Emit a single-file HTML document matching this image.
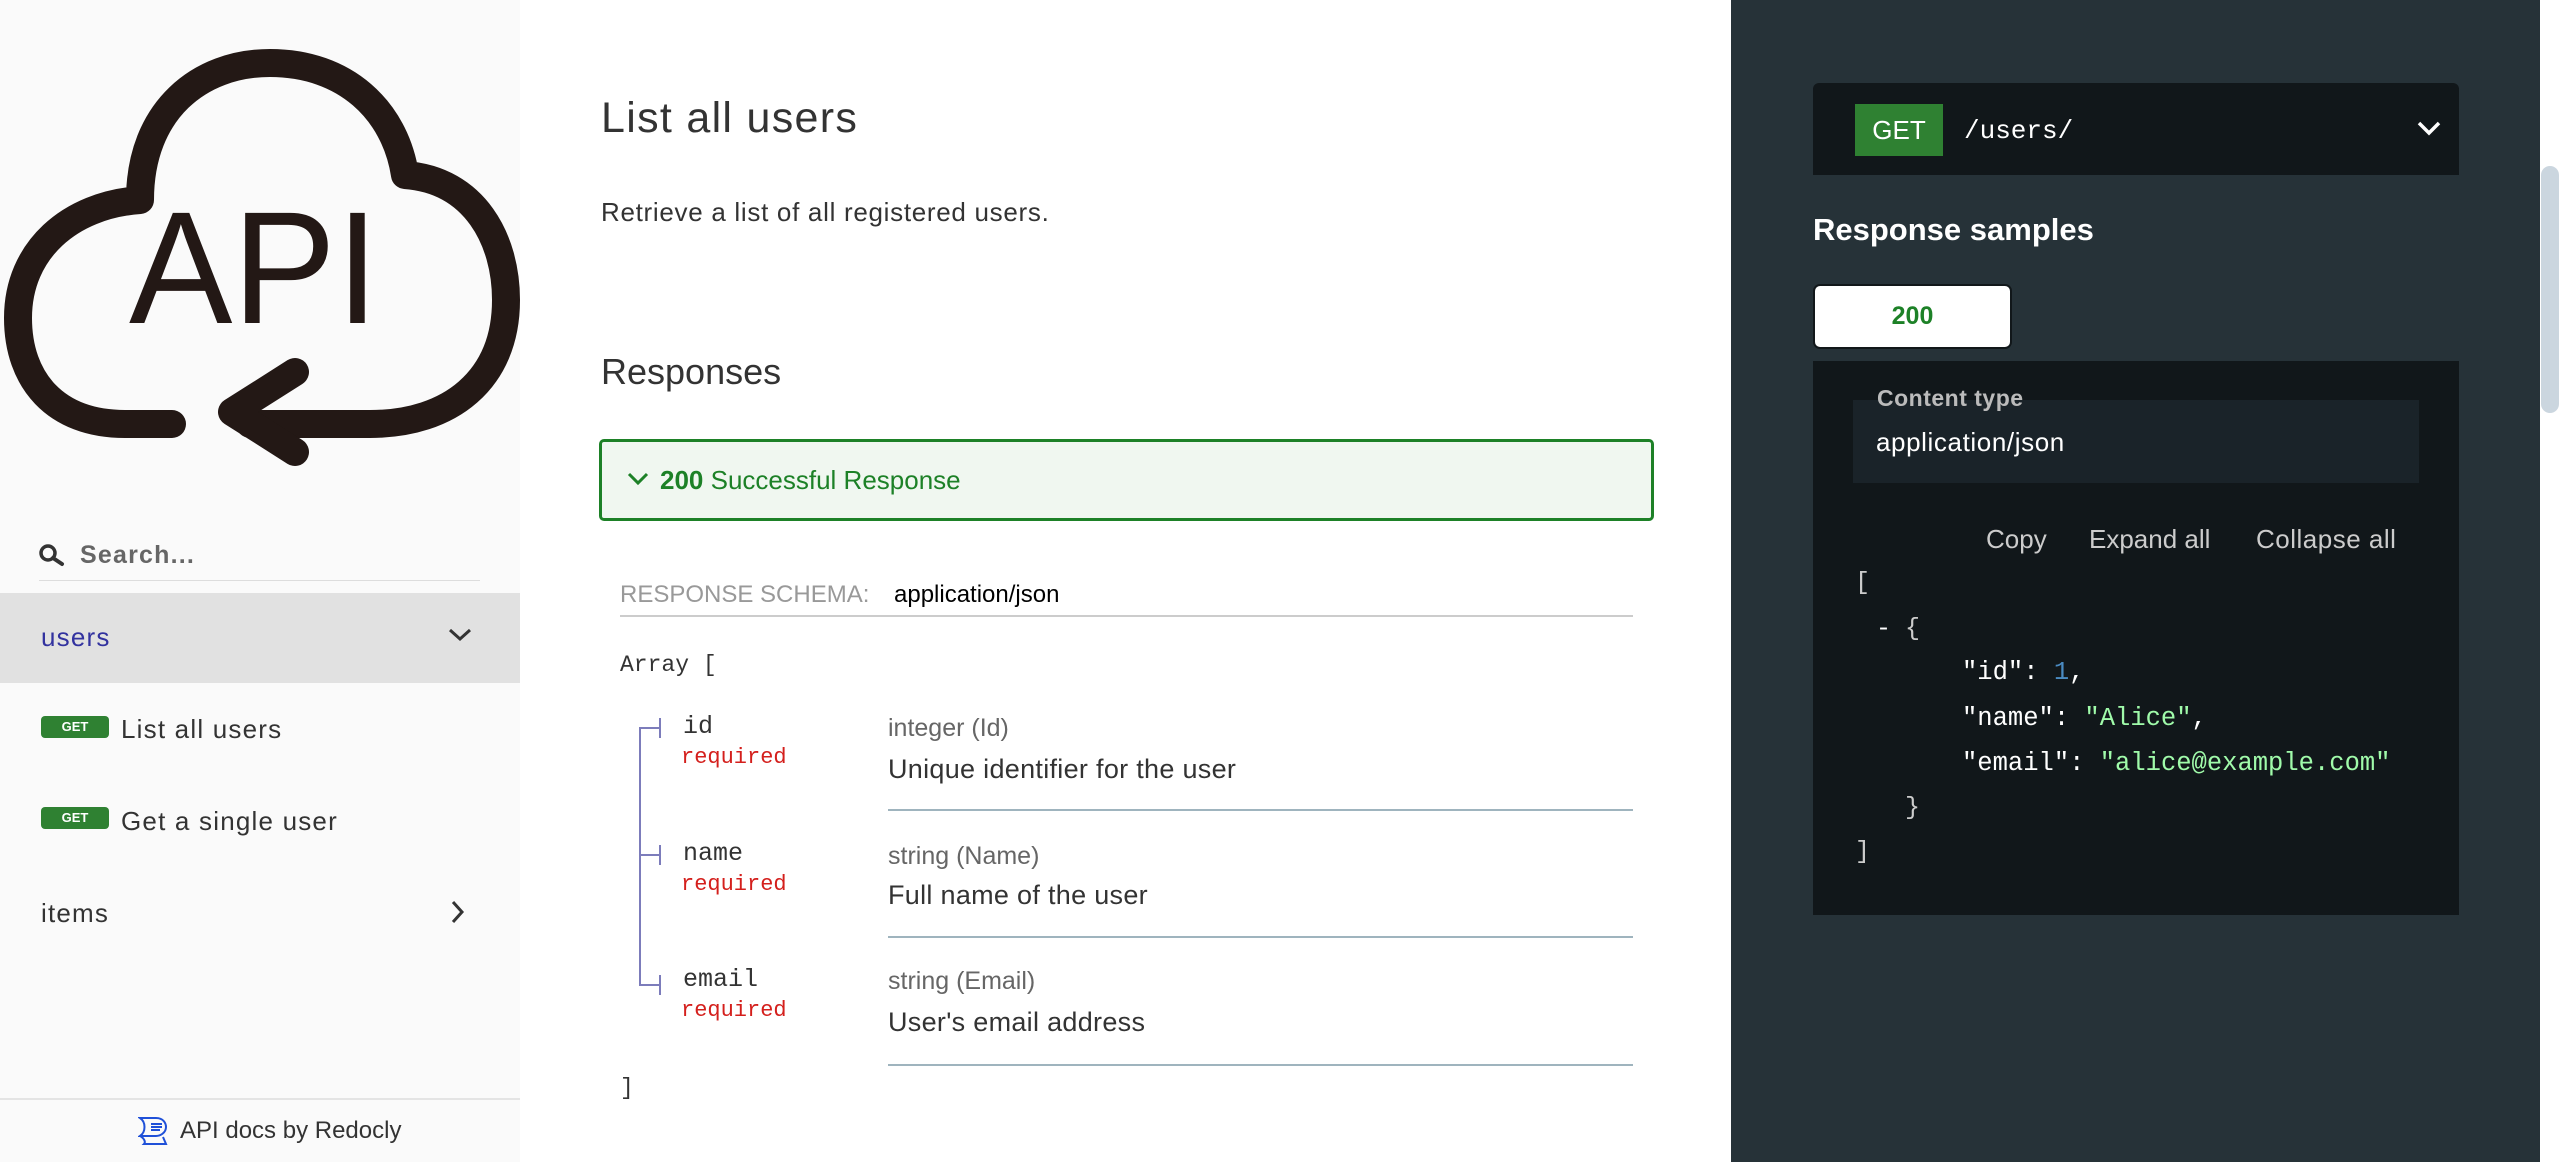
<!DOCTYPE html>
<html><head><meta charset="utf-8"><style>
*{margin:0;padding:0;box-sizing:border-box}
body{width:2560px;height:1162px;overflow:hidden;position:relative;background:#fff;font-family:"Liberation Sans",sans-serif;color:#333}
.a{position:absolute;white-space:nowrap}
.mono{font-family:"Liberation Mono",monospace}
.sb{letter-spacing:1.2px}
</style></head><body>
<!-- sidebar -->
<div class="a" style="left:0;top:0;width:520px;height:1162px;background:#fafafa"></div>
<svg class="a" style="left:0;top:0" width="520" height="480" viewBox="0 0 520 480">
<g fill="none" stroke="#231815" stroke-width="28" stroke-linecap="round" stroke-linejoin="round">
<path d="M172 424 L125 424 C55 424 18 380 18 318 C18 250 70 205 140 200 C140 110 200 63 270 63 C345 63 395 110 405 175 C475 180 506 240 506 300 C506 380 450 424 370 424 L250 424"/>
<path d="M295 372 L232 412 L295 452"/>
</g>
<text x="129" y="323" font-family="Liberation Sans" font-size="160" fill="#231815" textLength="250" lengthAdjust="spacingAndGlyphs">API</text>
</svg>
<svg class="a" style="left:38px;top:543px" width="28" height="24" viewBox="0 0 28 24"><circle cx="10" cy="10" r="7" fill="none" stroke="#333" stroke-width="3.5"/><path d="M15 15 L24 21" stroke="#333" stroke-width="4" stroke-linecap="round"/></svg>
<div class="a sb" style="left:80px;top:539px;font-size:25px;font-weight:bold;color:#666;line-height:32px">Search...</div>
<div class="a" style="left:39px;top:580px;width:441px;height:1px;background:#ddd"></div>
<div class="a" style="left:0;top:593px;width:520px;height:90px;background:#e1e1e1"></div>
<div class="a sb" style="left:41px;top:620px;font-size:26px;color:#32329f;line-height:34px">users</div>
<svg class="a" style="left:448px;top:627px" width="24" height="16"><path d="M2 3 L12 12 L22 3" fill="none" stroke="#333" stroke-width="3"/></svg>
<div class="a" style="left:41px;top:716px;width:68px;height:22px;background:#2f8132;border-radius:4px;color:#fff;font-size:13px;font-weight:bold;text-align:center;line-height:22px">GET</div>
<div class="a sb" style="left:121px;top:712px;font-size:26px;color:#333;line-height:34px">List all users</div>
<div class="a" style="left:41px;top:807px;width:68px;height:22px;background:#2f8132;border-radius:4px;color:#fff;font-size:13px;font-weight:bold;text-align:center;line-height:22px">GET</div>
<div class="a sb" style="left:121px;top:804px;font-size:26px;color:#333;line-height:34px">Get a single user</div>
<div class="a sb" style="left:41px;top:896px;font-size:26px;color:#333;line-height:34px">items</div>
<svg class="a" style="left:450px;top:900px" width="16" height="24"><path d="M3 2 L12 12 L3 22" fill="none" stroke="#333" stroke-width="3"/></svg>
<div class="a" style="left:0;top:1098px;width:520px;height:2px;background:#e4e4e4"></div>
<svg class="a" style="left:138px;top:1116px" width="32" height="30" viewBox="0 0 32 30"><g fill="none" stroke="#1f50d8" stroke-width="2"><path d="M2 2 H18 C26 2 28 8 28 11 C28 17 22 20 18 20 H2 C8 16 8 6 2 2Z"/><path d="M13 8 H24 M13 11 H24 M13 14 H22"/><path d="M2 20 C6 22 8 26 6 28 H28 L25 21"/></g></svg>
<div class="a" style="left:180px;top:1116px;font-size:24px;color:#333;line-height:30px">API docs by Redocly</div>

<!-- middle -->
<div class="a" style="left:601px;top:92px;font-size:43px;font-weight:300;color:#333;line-height:52px;letter-spacing:1.3px">List all users</div>
<div class="a" style="left:601px;top:195px;font-size:26px;color:#333;line-height:34px;letter-spacing:0.7px">Retrieve a list of all registered users.</div>
<div class="a" style="left:601px;top:350px;font-size:36px;color:#333;line-height:44px">Responses</div>
<div class="a" style="left:599px;top:439px;width:1055px;height:82px;border:3px solid #1d8127;border-radius:5px;background:#f0f7f0"></div>
<svg class="a" style="left:627px;top:471px" width="22" height="16"><path d="M2 3 L11 12 L20 3" fill="none" stroke="#1d8127" stroke-width="3"/></svg>
<div class="a" style="left:660px;top:463px;font-size:26px;color:#1d8127;line-height:34px"><b>200</b> Successful Response</div>
<div class="a" style="left:620px;top:580px;font-size:24px;color:#999;line-height:30px">RESPONSE SCHEMA:</div>
<div class="a" style="left:894px;top:580px;font-size:24px;color:#000;line-height:30px">application/json</div>
<div class="a" style="left:620px;top:615px;width:1013px;height:2px;background:#ccc"></div>
<div class="a mono" style="left:620px;top:651px;font-size:23px;color:#333;line-height:28px">Array [</div>
<div class="a" style="left:639px;top:727px;width:2px;height:258px;background:#7c7cbb"></div>
<div class="a" style="left:639px;top:727px;width:21px;height:2px;background:#7c7cbb"></div>
<div class="a" style="left:659px;top:718px;width:2px;height:20px;background:#7c7cbb"></div>
<div class="a" style="left:639px;top:854px;width:21px;height:2px;background:#7c7cbb"></div>
<div class="a" style="left:659px;top:845px;width:2px;height:20px;background:#7c7cbb"></div>
<div class="a" style="left:639px;top:984px;width:21px;height:2px;background:#7c7cbb"></div>
<div class="a" style="left:659px;top:975px;width:2px;height:20px;background:#7c7cbb"></div>

<div class="a mono" style="left:683px;top:712px;font-size:25px;color:#333;line-height:30px">id</div>
<div class="a mono" style="left:681px;top:745px;font-size:22px;color:#d41f1c;line-height:26px">required</div>
<div class="a" style="left:888px;top:713px;font-size:25px;color:#666;line-height:30px">integer (Id)</div>
<div class="a" style="left:888px;top:752px;font-size:27px;color:#333;line-height:34px;letter-spacing:0.3px">Unique identifier for the user</div>
<div class="a" style="left:888px;top:809px;width:745px;height:2px;background:#9fb4be"></div>

<div class="a mono" style="left:683px;top:839px;font-size:25px;color:#333;line-height:30px">name</div>
<div class="a mono" style="left:681px;top:872px;font-size:22px;color:#d41f1c;line-height:26px">required</div>
<div class="a" style="left:888px;top:841px;font-size:25px;color:#666;line-height:30px">string (Name)</div>
<div class="a" style="left:888px;top:878px;font-size:27px;color:#333;line-height:34px;letter-spacing:0.3px">Full name of the user</div>
<div class="a" style="left:888px;top:936px;width:745px;height:2px;background:#9fb4be"></div>

<div class="a mono" style="left:683px;top:965px;font-size:25px;color:#333;line-height:30px">email</div>
<div class="a mono" style="left:681px;top:998px;font-size:22px;color:#d41f1c;line-height:26px">required</div>
<div class="a" style="left:888px;top:966px;font-size:25px;color:#666;line-height:30px">string (Email)</div>
<div class="a" style="left:888px;top:1005px;font-size:27px;color:#333;line-height:34px;letter-spacing:0.3px">User's email address</div>
<div class="a" style="left:888px;top:1064px;width:745px;height:2px;background:#9fb4be"></div>
<div class="a mono" style="left:620px;top:1074px;font-size:23px;color:#333;line-height:28px">]</div>

<!-- right panel -->
<div class="a" style="left:1731px;top:0;width:809px;height:1162px;background:#263238"></div>
<div class="a" style="left:2540px;top:0;width:20px;height:1162px;background:#fff"></div>
<div class="a" style="left:2541px;top:166px;width:18px;height:247px;background:#cbd6df;border-radius:9px"></div>
<div class="a" style="left:1813px;top:83px;width:646px;height:92px;background:#11171a;border-radius:6px 6px 0 0"></div>
<div class="a" style="left:1855px;top:104px;width:88px;height:52px;background:#2f8132;color:#fff;font-size:26px;text-align:center;line-height:52px">GET</div>
<div class="a mono" style="left:1964px;top:116px;font-size:26px;color:#fff;line-height:30px">/users/</div>
<svg class="a" style="left:2416px;top:120px" width="26" height="18"><path d="M3 3 L13 13 L23 3" fill="none" stroke="#fff" stroke-width="3.5"/></svg>
<div class="a" style="left:1813px;top:210px;font-size:31px;font-weight:bold;color:#fff;line-height:40px">Response samples</div>
<div class="a" style="left:1813px;top:284px;width:199px;height:65px;background:#fff;border:2px solid #11171a;border-radius:7px;color:#1d8127;font-weight:bold;font-size:25px;text-align:center;line-height:61px">200</div>
<div class="a" style="left:1813px;top:361px;width:646px;height:554px;background:#11171a"></div>
<div class="a" style="left:1853px;top:400px;width:566px;height:83px;background:#1a2329"></div>
<div class="a" style="left:1877px;top:384px;font-size:23px;font-weight:bold;color:#bbb;line-height:28px;letter-spacing:0.5px">Content type</div>
<div class="a" style="left:1876px;top:426px;font-size:26px;color:#fff;line-height:32px;letter-spacing:0.6px">application/json</div>
<div class="a" style="left:1986px;top:523px;font-size:26px;color:#ccc;line-height:32px">Copy</div>
<div class="a" style="left:2089px;top:523px;font-size:26px;color:#ccc;line-height:32px">Expand all</div>
<div class="a" style="left:2256px;top:523px;font-size:26px;color:#ccc;line-height:32px;letter-spacing:0.5px">Collapse all</div>
<div class="a mono" style="left:1855px;top:568px;font-size:25px;color:#ccc;line-height:30px">[</div>
<div class="a mono" style="left:1876px;top:614px;font-size:25px;color:#fff;line-height:30px">-</div>
<div class="a mono" style="left:1905px;top:614px;font-size:25px;color:#ccc;line-height:30px">{</div>
<div class="a mono" style="left:1962px;top:658px;font-size:25.5px;color:#fff;line-height:30px">"id": <span style="color:#4a8bc2">1</span>,</div>
<div class="a mono" style="left:1962px;top:704px;font-size:25.5px;color:#fff;line-height:30px">"name": <span style="color:#a0fbaa">"Alice"</span>,</div>
<div class="a mono" style="left:1962px;top:749px;font-size:25.5px;color:#fff;line-height:30px">"email": <span style="color:#a0fbaa">"alice@example.com"</span></div>
<div class="a mono" style="left:1905px;top:793px;font-size:25px;color:#ccc;line-height:30px">}</div>
<div class="a mono" style="left:1855px;top:837px;font-size:25px;color:#ccc;line-height:30px">]</div>
</body></html>
